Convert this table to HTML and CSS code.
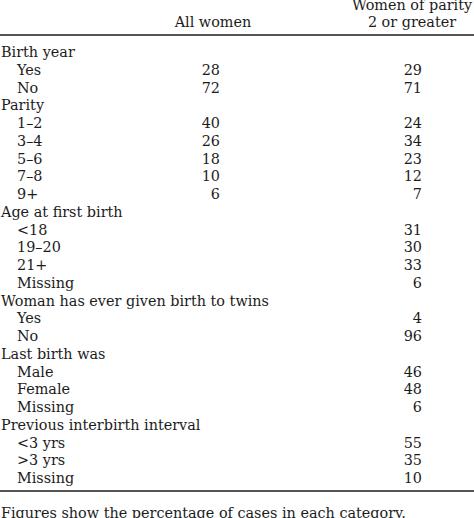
FILE: index.html
```html
<!DOCTYPE html>
<html>
<head>
<meta charset="utf-8">
<link rel="stylesheet" href="styles.css">
</head>
<body>
<div class="table">
  <div class="head">
    <div class="hcol1">All women</div>
    <div class="hcol2">Women of parity<br>2 or greater</div>
  </div>
  <div class="rows">
    <div class="group">Birth year</div>
    <div class="lbl">Yes</div><div class="n1">28</div><div class="n2">29</div>
    <div class="lbl">No</div><div class="n1">72</div><div class="n2">71</div>
    <div class="group">Parity</div>
    <div class="lbl">1–2</div><div class="n1">40</div><div class="n2">24</div>
    <div class="lbl">3–4</div><div class="n1">26</div><div class="n2">34</div>
    <div class="lbl">5–6</div><div class="n1">18</div><div class="n2">23</div>
    <div class="lbl">7–8</div><div class="n1">10</div><div class="n2">12</div>
    <div class="lbl">9+</div><div class="n1">6</div><div class="n2">7</div>
    <div class="group">Age at first birth</div>
    <div class="lbl">&lt;18</div><div class="n1"></div><div class="n2">31</div>
    <div class="lbl">19–20</div><div class="n1"></div><div class="n2">30</div>
    <div class="lbl">21+</div><div class="n1"></div><div class="n2">33</div>
    <div class="lbl">Missing</div><div class="n1"></div><div class="n2">6</div>
    <div class="group">Woman has ever given birth to twins</div>
    <div class="lbl">Yes</div><div class="n1"></div><div class="n2">4</div>
    <div class="lbl">No</div><div class="n1"></div><div class="n2">96</div>
    <div class="group">Last birth was</div>
    <div class="lbl">Male</div><div class="n1"></div><div class="n2">46</div>
    <div class="lbl">Female</div><div class="n1"></div><div class="n2">48</div>
    <div class="lbl">Missing</div><div class="n1"></div><div class="n2">6</div>
    <div class="group">Previous interbirth interval</div>
    <div class="lbl">&lt;3 yrs</div><div class="n1"></div><div class="n2">55</div>
    <div class="lbl">&gt;3 yrs</div><div class="n1"></div><div class="n2">35</div>
    <div class="lbl">Missing</div><div class="n1"></div><div class="n2">10</div>
  </div>
  <div class="note">Figures show the percentage of cases in each category.</div>
</div>
</body>
</html>
```
FILE: styles.css
```css
html, body {
  margin: 0;
  padding: 0;
  background: #fff;
}
body {
  width: 474px;
  height: 518px;
  overflow: hidden;
  font-family: "DejaVu Serif", "Liberation Serif", serif;
  font-size: 14.4px;
  color: #1c1c1c;
}
.table {
  width: 474px;
}
.head {
  display: flex;
  align-items: flex-end;
  margin-top: -3px;
  line-height: 17px;
  padding-bottom: 3px;
  border-bottom: 2px solid #555;
}
.hcol1 {
  width: 80px;
  margin-left: 173px;
  text-align: center;
  white-space: nowrap;
}
.hcol2 {
  width: 124px;
  margin-left: 97px;
  text-align: center;
  white-space: nowrap;
}
.rows {
  display: grid;
  grid-template-columns: 160px 60px 202px;
  padding-right: 52px;
  line-height: 17.75px;
  padding-top: 8px;
  padding-bottom: 2px;
  border-bottom: 2px solid #555;
}
.group {
  grid-column: 1 / -1;
  padding-left: 1px;
  white-space: nowrap;
}
.lbl {
  padding-left: 17px;
  white-space: nowrap;
}
.n1, .n2 {
  text-align: right;
}
.note {
  margin-top: 13px;
  padding-left: 1px;
  line-height: 17px;
  white-space: nowrap;
}
```
